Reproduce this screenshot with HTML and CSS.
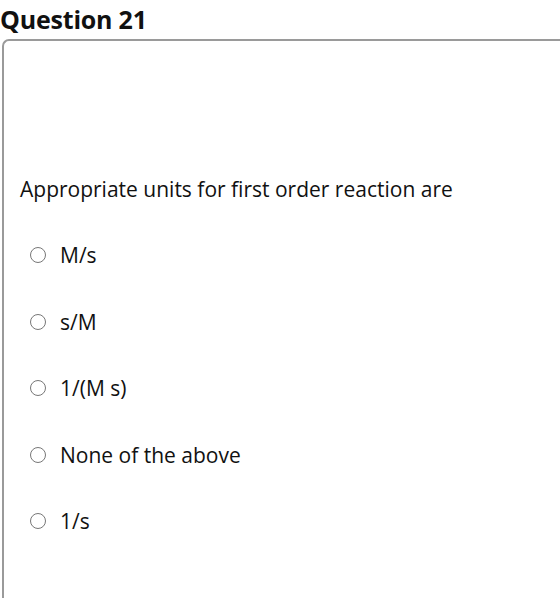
FILE: index.html
```html
<!DOCTYPE html>
<html>
<head>
<meta charset="utf-8">
<link rel="stylesheet" href="styles.css">
</head>
<body>
<h2 class="title">Question 21</h2>
<div class="card">
  <p class="prompt">Appropriate units for first order reaction are</p>
  <ul class="options">
    <li class="option"><span class="radio"></span><span>M/s</span></li>
    <li class="option"><span class="radio"></span><span>s/M</span></li>
    <li class="option"><span class="radio"></span><span>1/(M s)</span></li>
    <li class="option"><span class="radio"></span><span>None of the above</span></li>
    <li class="option"><span class="radio"></span><span>1/s</span></li>
  </ul>
</div>
</body>
</html>
```
FILE: styles.css
```css
html, body {
  margin: 0;
  padding: 0;
  background: #fff;
  overflow: hidden;
}
body {
  font-family: "Open Sans", "Liberation Sans", sans-serif;
  color: #111;
  width: 560px;
  height: 598px;
}
.title {
  margin: 0;
  padding: 0;
  font-size: 25px;
  font-weight: 700;
  line-height: 38px;
  height: 38px;
  letter-spacing: -0.2px;
}
.card {
  margin-left: 2px;
  margin-top: 1px;
  width: 558px;
  height: 559px;
  border-top: 2px solid #9a9a9a;
  border-left: 2px solid #9a9a9a;
  border-radius: 7px 0 0 0;
  box-sizing: border-box;
  padding: 134px 0 0 16px;
}
.prompt {
  margin: 0;
  font-size: 21px;
  line-height: 28px;
}
.options {
  list-style: none;
  margin: 35px 0 0 0;
  padding: 0 0 0 10px;
}
.option {
  display: flex;
  align-items: center;
  gap: 14px;
  height: 66.5px;
  font-size: 21px;
  margin: 0;
}
.option:first-child {
  margin-top: -16px;
}
.radio {
  width: 14px;
  height: 14px;
  border: 1.5px solid #777;
  border-radius: 50%;
  flex: none;
}
```
